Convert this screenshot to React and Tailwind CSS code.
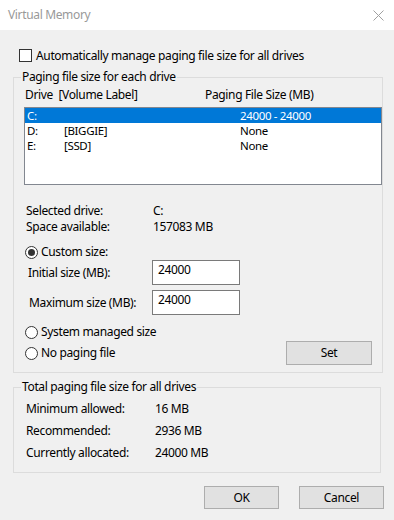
import React from "react";

const font = { fontFamily: '"Noto Sans", "Open Sans", sans-serif' };

function Radio({ checked }) {
  return (
    <span className="w-[13px] h-[13px] rounded-full border border-[#333333] bg-white flex items-center justify-center shrink-0">
      {checked && <span className="w-[7px] h-[7px] rounded-full bg-[#333333]" />}
    </span>
  );
}

function Row({ label, value, w }) {
  return (
    <div className="flex h-[16px] leading-[16px]">
      <span className={w}>{label}</span>
      <span>{value}</span>
    </div>
  );
}

export default function App() {
  return (
    <div
      className="w-[394px] h-[520px] bg-[#f0f0f0] text-[12px] tracking-[-0.35px] leading-[16px] text-black flex flex-col overflow-hidden"
      style={font}
    >
      {/* Title bar */}
      <div className="h-[30px] bg-white flex items-center justify-between pl-[8px] pr-[10px] shrink-0">
        <span className="text-[#999999] text-[12px]">Virtual Memory</span>
        <svg width="11" height="11" viewBox="0 0 11 11">
          <path d="M0.5 0.5 L10.5 10.5 M10.5 0.5 L0.5 10.5" stroke="#a0a0a0" strokeWidth="1" />
        </svg>
      </div>

      {/* Checkbox */}
      <div className="mt-[19px] ml-[19px] flex items-center h-[13px]">
        <span className="w-[13px] h-[13px] border border-[#333333] bg-white shrink-0" />
        <span className="ml-[4px] whitespace-nowrap">Automatically manage paging file size for all drives</span>
      </div>

      {/* Group 1 */}
      <fieldset className="mt-[7px] ml-[13px] w-[368px] border border-[#dcdcdc] pb-[7px]">
        <legend className="ml-[7px] px-[1px] leading-[16px]">Paging file size for each drive</legend>
        <div className="mt-[2px] ml-[11px] flex h-[16px]">
          <span className="w-[180px]">Drive&nbsp;&nbsp;[Volume Label]</span>
          <span>Paging File Size (MB)</span>
        </div>
        <div className="mt-[4px] ml-[10px] w-[358px] h-[78px] border border-[#828790] bg-white text-[11.5px]">
          <div className="h-[15px] leading-[15px] bg-[#0078d7] text-white flex">
            <span className="pl-[2px] w-[215px]">C:</span>
            <span>24000 - 24000</span>
          </div>
          <div className="h-[15px] leading-[15px] flex">
            <span className="pl-[2px] w-[39px]">D:</span>
            <span className="w-[176px]">[BIGGIE]</span>
            <span>None</span>
          </div>
          <div className="h-[15px] leading-[15px] flex">
            <span className="pl-[2px] w-[39px]">E:</span>
            <span className="w-[176px]">[SSD]</span>
            <span>None</span>
          </div>
        </div>

        <div className="mt-[18px] ml-[12px]">
          <Row label="Selected drive:" value="C:" w="w-[127px]" />
          <Row label="Space available:" value="157083 MB" w="w-[127px]" />
        </div>

        <div className="mt-[9px] ml-[11px] flex items-center h-[16px]">
          <Radio checked />
          <span className="ml-[3px]">Custom size:</span>
        </div>

        <div className="flex items-center h-[25px]">
          <span className="ml-[14px] w-[124px]">Initial size (MB):</span>
          <div className="w-[88px] h-[25px] border border-[#7a7a7a] bg-white pl-[5px] pt-[1px]">24000</div>
        </div>
        <div className="mt-[5px] flex items-center h-[25px]">
          <span className="ml-[15px] w-[123px]">Maximum size (MB):</span>
          <div className="w-[88px] h-[25px] border border-[#7a7a7a] bg-white pl-[5px] pt-[1px]">24000</div>
        </div>

        <div className="flex">
          <div className="w-[272px] pl-[11px]">
            <div className="mt-[9px] flex items-center h-[16px]">
              <Radio />
              <span className="ml-[3px]">System managed size</span>
            </div>
            <div className="mt-[5px] flex items-center h-[16px]">
              <Radio />
              <span className="ml-[3px]">No paging file</span>
            </div>
          </div>
          <div className="mt-[26px] w-[86px] h-[24px] bg-[#e1e1e1] border border-[#adadad] flex items-center justify-center">
            Set
          </div>
        </div>
      </fieldset>

      {/* Group 2 */}
      <fieldset className="mt-[6px] ml-[13px] w-[368px] border border-[#dcdcdc] pb-[11px]">
        <legend className="ml-[7px] px-[1px] leading-[16px]">Total paging file size for all drives</legend>
        <div className="mt-[6px] ml-[12px] flex flex-col gap-[6px]">
          <Row label="Minimum allowed:" value="16 MB" w="w-[129px]" />
          <Row label="Recommended:" value="2936 MB" w="w-[129px]" />
          <Row label="Currently allocated:" value="24000 MB" w="w-[129px]" />
        </div>
      </fieldset>

      {/* Buttons */}
      <div className="mt-[13px] ml-[204px] flex gap-[20px]">
        <div className="w-[75px] h-[23px] bg-[#e1e1e1] border border-[#adadad] flex items-center justify-center">OK</div>
        <div className="w-[85px] h-[23px] bg-[#e1e1e1] border border-[#adadad] flex items-center justify-center">Cancel</div>
      </div>
    </div>
  );
}
